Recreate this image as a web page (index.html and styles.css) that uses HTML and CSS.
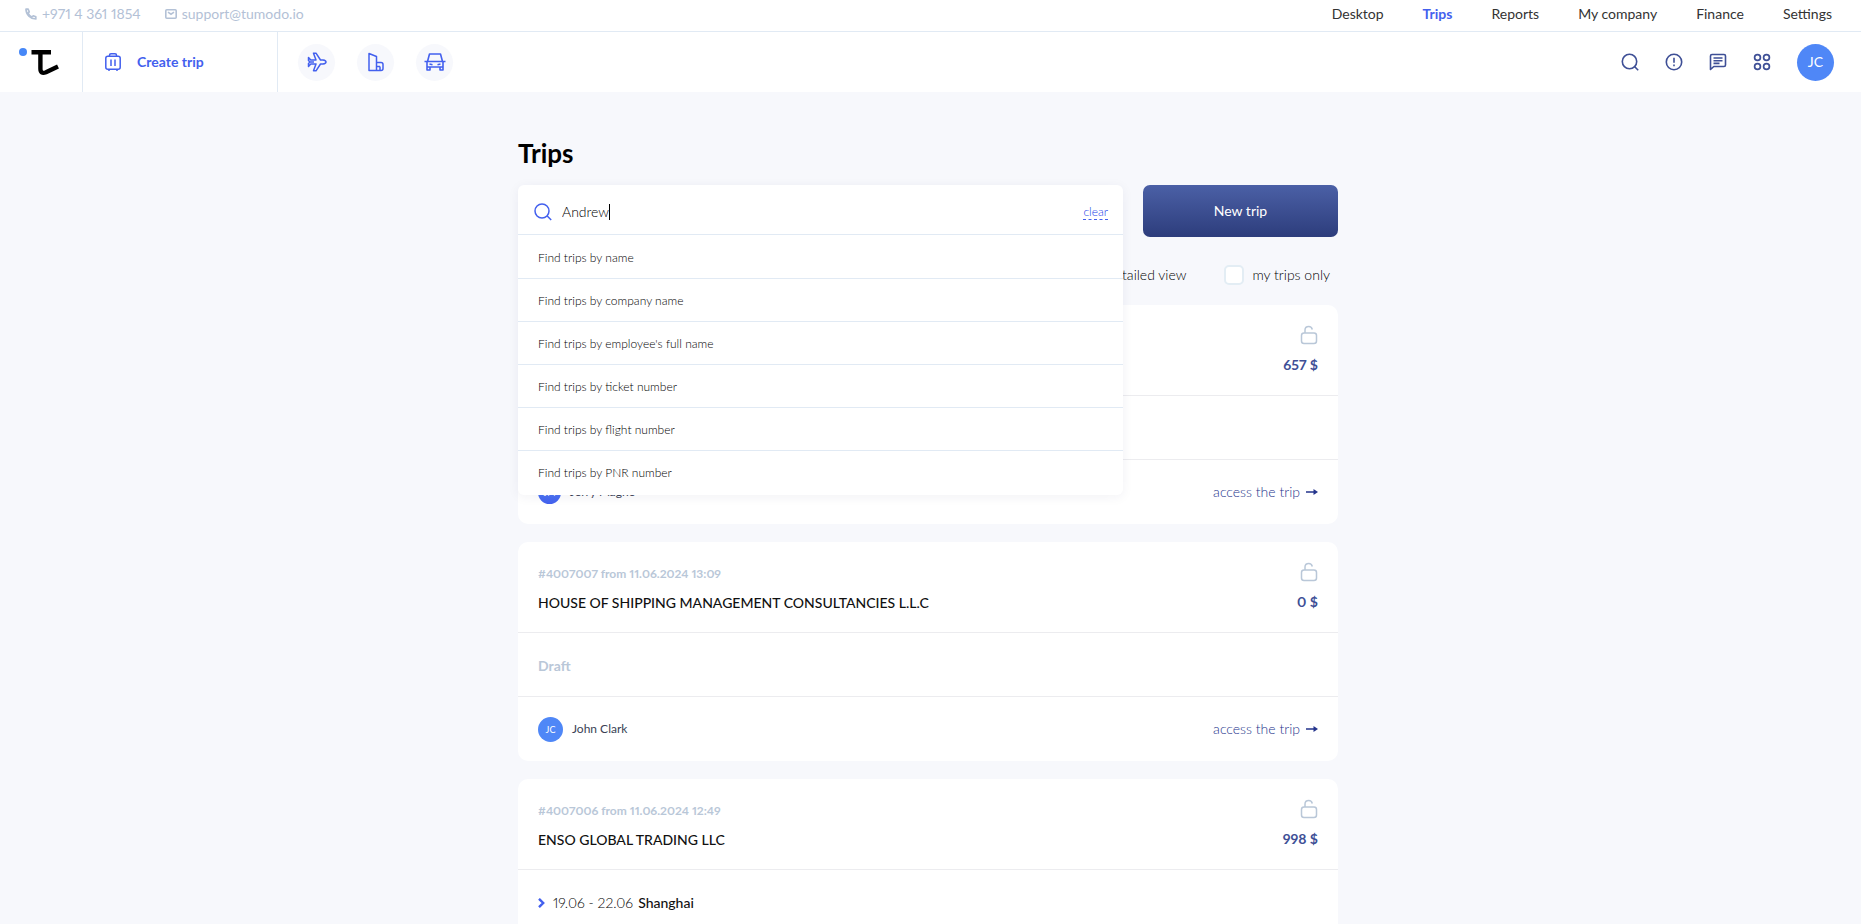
FILE: index.html
```html
<!DOCTYPE html>
<html lang="en">
<head>
  <meta charset="UTF-8">
  <meta name="viewport" content="width=device-width, initial-scale=1.0">
  <title>Trips - Tumodo</title>
  <link rel="stylesheet" href="styles.css">
</head>
<body>
  <div class="topbar">
    <div class="contacts">
      <a href="tel:+97143611854">
        <svg width="12" height="12" viewBox="0 0 12 12" fill="none" stroke="currentColor" stroke-width="1.7" stroke-linejoin="round"><path d="M1 1.2h2.2l1 2.6L3 5.1a7.5 7.5 0 0 0 3.900 3.900l1.300-1.200 2.600 1v2.200C5.500 11 1 6.500 1 1.200z"/></svg>
        +971 4 361 1854
      </a>
      <a href="mailto:support@tumodo.io">
        <svg width="12" height="10" viewBox="0 0 12 10" fill="none" stroke="currentColor" stroke-width="1.6"><rect x=".8" y=".8" width="10.4" height="8.4" rx="1"/><path d="M3 3.200l3 2 3-2"/></svg>
        support@tumodo.io
      </a>
    </div>
    <nav>
      <a href="#">Desktop</a>
      <a href="#" class="active">Trips</a>
      <a href="#">Reports</a>
      <a href="#">My company</a>
      <a href="#">Finance</a>
      <a href="#">Settings</a>
    </nav>
  </div>

  <header>
    <a href="#" class="logo" aria-label="Tumodo">
      <svg width="40" height="30" viewBox="0 0 40 30"><circle cx="4" cy="5" r="4" fill="#4687f7"/><path d="M12.500 5.200H32M21.400 5v16.500q0 6 5.600 3.700L39 19.500" fill="none" stroke="#000" stroke-width="4.400"/></svg>
    </a>
    <a href="#" class="create">
      <svg width="16" height="18" viewBox="0 0 16 18" fill="none" stroke="currentColor" stroke-width="1.5"><rect x=".8" y="3.200" width="14.400" height="13" rx="2"/><path d="M4.500 3V2.300q0-1.500 1.500-1.500h4q1.500 0 1.500 1.500V3M6 6.500v6.500M10 6.500v6.500M4 16.500v1.500M12 16.500v1.500"/></svg>
      Create trip
    </a>
    <div class="services">
      <button type="button" aria-label="Flights">
        <svg width="20" height="20" viewBox="0 0 20 20" fill="none" stroke="currentColor" stroke-width="1.5" stroke-linejoin="round"><path d="M1.500 5.500L3.800 8H9L6.500 1.200H9L13.500 8H16q3 .4 3 2t-3 2h-2.500L9 18.800H6.500L9 12H3.800L1.500 14.500V11.600L3 10 1.500 8.400zM3 10h4"/></svg>
      </button>
      <button type="button" aria-label="Hotels">
        <svg width="18" height="20" viewBox="0 0 18 20" fill="none" stroke="currentColor" stroke-width="1.5" stroke-linejoin="round"><path d="M2 18.500V1.500l7.500 3v14zM9.500 10.500h4.500q2 0 2 2v4q0 2-2 2H2M13 14.500v4M9.500 14.500H13"/></svg>
      </button>
      <button type="button" aria-label="Cars">
        <svg width="22" height="18" viewBox="0 0 22 18" fill="none" stroke="currentColor" stroke-width="1.6" stroke-linejoin="round"><path d="M3.500 8.500L5.500 1h11l2 7.500M.5 8.500h21M3 8.500v5.500h16V8.500M3 14v3h3v-3M16 14v3h3v-3M5.500 11l3 .8M16.500 11l-3 .8"/></svg>
      </button>
    </div>
    <div class="tools">
      <button type="button" aria-label="Search">
        <svg width="18" height="18" viewBox="0 0 18 18" fill="none" stroke="currentColor" stroke-width="1.6"><circle cx="8.500" cy="8.500" r="7.200"/><path d="M13.500 13.500L17.200 17.200"/></svg>
      </button>
      <button type="button" aria-label="Notices">
        <svg width="18" height="18" viewBox="0 0 18 18" fill="none" stroke="currentColor" stroke-width="1.6"><circle cx="9" cy="9" r="7.700"/><path d="M9 4.800v5M9 11.500v1.700"/></svg>
      </button>
      <button type="button" aria-label="Messages">
        <svg width="18" height="18" viewBox="0 0 18 18" fill="none" stroke="currentColor" stroke-width="1.6" stroke-linejoin="round"><path d="M1.500 16.500V3q0-1.500 1.500-1.500h12q1.500 0 1.500 1.500v9q0 1.500-1.500 1.500H4.800zM4.500 5h9M4.500 7.700h9M4.500 10.400h6"/></svg>
      </button>
      <button type="button" aria-label="Apps">
        <svg width="18" height="18" viewBox="0 0 18 18" fill="none" stroke="currentColor" stroke-width="1.7"><circle cx="4.500" cy="4.500" r="2.900"/><circle cx="13.500" cy="4.500" r="2.900"/><circle cx="4.500" cy="13.500" r="2.900"/><circle cx="13.500" cy="13.500" r="2.900"/></svg>
      </button>
      <button type="button" class="avatar">JC</button>
    </div>
  </header>

  <main>
    <h1>Trips</h1>
    <div class="actions">
      <div class="search-slot">
        <form class="search">
          <div class="search-row">
            <svg width="18" height="18" viewBox="0 0 18 18" fill="none" stroke="currentColor" stroke-width="1.5"><circle cx="8" cy="8" r="7"/><path d="M13 12.800L17.200 17"/></svg>
            <div class="field">
              <input type="text" aria-label="Search trips" value="Andrew">
              <span class="caret"></span>
            </div>
            <button type="reset">clear</button>
          </div>
          <ul>
            <li><a href="#">Find trips by name</a></li>
            <li><a href="#">Find trips by company name</a></li>
            <li><a href="#">Find trips by employee's full name</a></li>
            <li><a href="#">Find trips by ticket number</a></li>
            <li><a href="#">Find trips by flight number</a></li>
            <li><a href="#">Find trips by PNR number</a></li>
          </ul>
        </form>
      </div>
      <button type="button" class="new-trip">New trip</button>
    </div>

    <div class="filters">
      <label><input type="checkbox"> detailed view</label>
      <label><input type="checkbox"> my trips only</label>
    </div>

    <article class="trip">
      <div class="trip-head">
        <div class="trip-info"></div>
        <div class="trip-price">
          <svg width="18" height="20" viewBox="0 0 18 20" fill="none" stroke="currentColor" stroke-width="1.5"><rect x="1.500" y="8" width="15" height="10.500" rx="2.500"/><path d="M5 8V5q0-3.500 3.800-3.500 2.800 0 3.500 3"/></svg>
          <strong>657 $</strong>
        </div>
      </div>
      <div class="trip-body"></div>
      <div class="trip-foot">
        <div class="person"><span class="mini mini-blue">JM</span> Jerry Magno</div>
        <a href="#">access the trip <svg width="12" height="8" viewBox="0 0 12 8"><path d="M0 3.200h7.500V1L12 4 7.500 7V4.800H0z" fill="currentColor"/></svg></a>
      </div>
    </article>

    <article class="trip">
      <div class="trip-head">
        <div class="trip-info">
          <p>#4007007 from 11.06.2024 13:09</p>
          <h2>HOUSE OF SHIPPING MANAGEMENT CONSULTANCIES L.L.C</h2>
        </div>
        <div class="trip-price">
          <svg width="18" height="20" viewBox="0 0 18 20" fill="none" stroke="currentColor" stroke-width="1.5"><rect x="1.500" y="8" width="15" height="10.500" rx="2.500"/><path d="M5 8V5q0-3.500 3.800-3.500 2.800 0 3.500 3"/></svg>
          <strong>0 $</strong>
        </div>
      </div>
      <div class="trip-body"><span class="draft">Draft</span></div>
      <div class="trip-foot">
        <div class="person"><span class="mini">JC</span> John Clark</div>
        <a href="#">access the trip <svg width="12" height="8" viewBox="0 0 12 8"><path d="M0 3.200h7.500V1L12 4 7.500 7V4.800H0z" fill="currentColor"/></svg></a>
      </div>
    </article>

    <article class="trip">
      <div class="trip-head">
        <div class="trip-info">
          <p>#4007006 from 11.06.2024 12:49</p>
          <h2>ENSO GLOBAL TRADING LLC</h2>
        </div>
        <div class="trip-price">
          <svg width="18" height="20" viewBox="0 0 18 20" fill="none" stroke="currentColor" stroke-width="1.5"><rect x="1.500" y="8" width="15" height="10.500" rx="2.500"/><path d="M5 8V5q0-3.500 3.800-3.500 2.800 0 3.500 3"/></svg>
          <strong>998 $</strong>
        </div>
      </div>
      <div class="trip-body">
        <svg class="chevron" width="7" height="10" viewBox="0 0 7 10" fill="none" stroke="currentColor" stroke-width="2.4"><path d="M1 .8L5.200 5 1 9.200"/></svg>
        <span class="dates">19.06 - 22.06</span>
        <span class="city">Shanghai</span>
      </div>
    </article>
  </main>
</body>
</html>
```
FILE: styles.css
```css
* {
  box-sizing: border-box;
  margin: 0;
  padding: 0;
}
body {
  background: #f7f8fc;
  color: #111;
  font-family: Lato, sans-serif;
  font-size: 14px;
  line-height: 20px;
  font-variant-numeric: proportional-nums;
  height: 100vh;
  overflow: hidden;
}
a {
  color: inherit;
  text-decoration: none;
}
button, input {
  font: inherit;
  color: inherit;
  border: none;
  background: none;
}
button {
  cursor: pointer;
}
svg {
  display: block;
  flex: none;
}

/* top line with contacts and menu */
.topbar {
  display: flex;
  justify-content: space-between;
  align-items: center;
  height: 32px;
  padding: 0 29px 3px 25px;
  background: #fff;
  border-bottom: 1px solid #e1eaf4;
}
.contacts {
  display: flex;
  gap: 24px;
  color: #b3c1d6;
}
.contacts a {
  display: flex;
  align-items: center;
  gap: 5px;
}
nav {
  display: flex;
  gap: 39px;
  color: #333;
}
nav .active {
  color: #4360ee;
  font-weight: 700;
}

header {
  display: flex;
  height: 60px;
  background: #fff;
}
.logo {
  width: 83px;
  padding: 15px 0 0 19px;
  border-right: 1px solid #e1eaf4;
}
.create {
  display: flex;
  align-items: center;
  gap: 16px;
  width: 195px;
  padding-left: 22px;
  color: #4360ee;
  font-weight: 700;
  border-right: 1px solid #e1eaf4;
}
.services {
  display: flex;
  align-items: center;
  gap: 22px;
  padding-left: 20px;
  color: #4360ee;
}
.services button {
  display: flex;
  align-items: center;
  justify-content: center;
  width: 37px;
  height: 37px;
  border-radius: 50%;
  background: #f7f8fc;
}
.tools {
  display: flex;
  align-items: center;
  gap: 26px;
  margin-left: auto;
  padding-right: 27px;
  color: #3e4f96;
}
.tools .avatar {
  width: 37px;
  height: 37px;
  border-radius: 50%;
  background: #4f87f7;
  color: #fff;
}

main {
  padding: 45px 5px 0 0;
  width: 825px;
  margin: 0 auto;
}
h1 {
  font-size: 26px;
  line-height: 32px;
  font-weight: 700;
  margin-bottom: 16px;
  color: #000;
}
.actions {
  display: flex;
  gap: 20px;
}
.search-slot {
  position: relative;
  flex: 1;
}
/* suggestions open over the list */
.search {
  position: absolute;
  z-index: 1;
  left: 0;
  right: 0;
  top: 0;
  background: #fff;
  border-radius: 6px;
  box-shadow: 0 2px 12px rgba(30, 40, 80, 0.06);
}
.search-row {
  display: flex;
  align-items: center;
  height: 50px;
  padding: 4px 15px 0 16px;
  gap: 10px;
  color: #4360ee;
  border-bottom: 1px solid #e1eaf4;
}
.field {
  display: flex;
  align-items: center;
  flex: 1;
}
.field input {
  field-sizing: content;
  color: #000;
  outline: none;
}
.caret {
  width: 1px;
  height: 16px;
  background: #000;
}
.search-row button {
  font-size: 12px;
  line-height: 15px;
  color: #2040e8;
  border-bottom: 1px dashed #4360ee;
}
.search ul {
  list-style: none;
  padding: 1px 0;
}
.search li {
  height: 43px;
  padding: 12px 20px;
  font-size: 12px;
  line-height: 20px;
  color: #000;
  border-bottom: 1px solid #e1eaf4;
}
.search li:last-child {
  border-bottom: none;
}
.new-trip {
  width: 195px;
  height: 52px;
  border-radius: 7px;
  background: linear-gradient(#4b60a6, #2d3d7c);
  color: #fff;
}
.filters {
  display: flex;
  justify-content: flex-end;
  gap: 38px;
  height: 68px;
  padding: 28px 8px 0 0;
  color: #000;
}
.filters label {
  display: flex;
  gap: 8px;
  height: 20px;
}
.filters input {
  appearance: none;
  width: 20px;
  height: 20px;
  border: 2px solid #e3edf4;
  border-radius: 5px;
  background: #fff;
}

.trip {
  background: #fff;
  border-radius: 10px;
  margin-bottom: 18px;
}
.trip-head {
  display: flex;
  justify-content: space-between;
  height: 91px;
  padding: 20px;
  border-bottom: 1px solid #ececef;
}
.trip-info p {
  margin: 2px 0 9px;
  font-size: 12px;
  font-weight: 700;
  color: #b9c7d8;
}
.trip-info h2 {
  font-size: 14px;
  font-weight: 500;
}
.trip-price {
  display: flex;
  flex-direction: column;
  align-items: flex-end;
  gap: 10px;
  color: #b9c7d8;
}
.trip-price strong {
  color: #3e4f96;
}
.trip-body {
  display: flex;
  align-items: center;
  gap: 5px;
  height: 64px;
  padding: 2px 20px 0;
  border-bottom: 1px solid #ececef;
}
.draft {
  color: #b9c7d8;
  font-weight: 700;
}
.chevron {
  margin-right: 3px;
  color: #4360ee;
}
.dates {
  font-weight: 300;
  color: #000;
}
.city {
  font-weight: 500;
}
.trip-foot {
  display: flex;
  align-items: center;
  justify-content: space-between;
  height: 64px;
  padding: 0 20px;
}
.trip-foot a {
  display: flex;
  align-items: center;
  gap: 6px;
  color: #24348c;
}
.person {
  display: flex;
  align-items: center;
  gap: 9px;
  font-size: 12px;
  color: #3a3f55;
}
.mini {
  width: 25px;
  height: 25px;
  border-radius: 50%;
  background: #4f87f7;
  color: #fff;
  font-size: 9px;
  line-height: 25px;
  text-align: center;
}
.mini-blue {
  width: 23px;
  height: 23px;
  line-height: 23px;
  background: linear-gradient(#5b90fa, #4360ee);
}
.search-row input,
.search-row button,
.search li,
.filters,
.trip-foot a {
  font-weight: 300;
}
```
